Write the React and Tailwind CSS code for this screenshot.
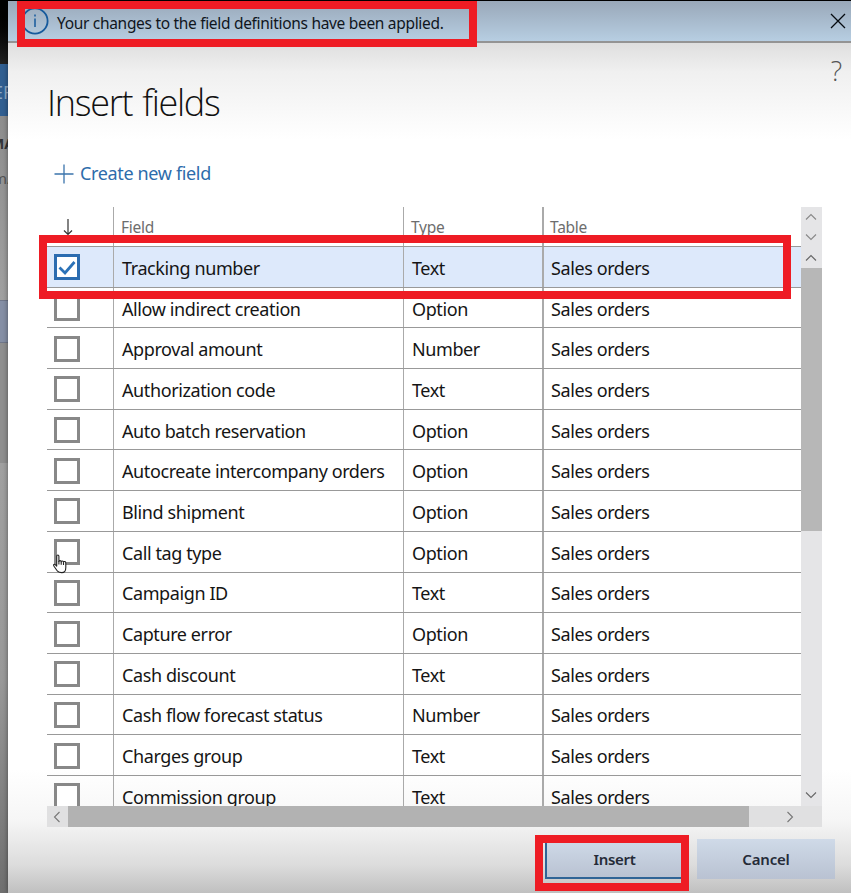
import { useState } from "react";
import clsx from "clsx";

const initialFields = [
  { name: "Tracking number", type: "Text", checked: true },
  { name: "Allow indirect creation", type: "Option" },
  { name: "Approval amount", type: "Number" },
  { name: "Authorization code", type: "Text" },
  { name: "Auto batch reservation", type: "Option" },
  { name: "Autocreate intercompany orders", type: "Option" },
  { name: "Blind shipment", type: "Option" },
  { name: "Call tag type", type: "Option" },
  { name: "Campaign ID", type: "Text" },
  { name: "Capture error", type: "Option" },
  { name: "Cash discount", type: "Text" },
  { name: "Cash flow forecast status", type: "Number" },
  { name: "Charges group", type: "Text" },
  { name: "Commission group", type: "Text" },
];

const Chevron = ({ d, className }) => (
  <svg
    viewBox="0 0 12 12"
    className={clsx("h-3 w-3 shrink-0", className)}
    fill="none"
    stroke="currentColor"
    strokeWidth="1.1"
  >
    <path d={d} />
  </svg>
);

const UP = "M1 8.5 6 3.5l5 5";
const DOWN = "M1 3.5l5 5 5-5";
const LEFT = "M8.5 1 3.5 6l5 5";
const RIGHT = "M3.5 1l5 5-5 5";

const Checkbox = ({ checked, onChange }) => (
  <button
    onClick={onChange}
    className={clsx(
      "flex h-[26px] w-[26px] items-center justify-center border-[3px] bg-white",
      checked ? "border-[#2b6cb0]" : "border-[#888]"
    )}
  >
    {checked && (
      <svg viewBox="0 0 20 20" className="h-5 w-5 shrink-0" fill="none">
        <path d="M2.5 10.5 8 16 17.5 5" stroke="#2b72b8" strokeWidth="2.8" />
      </svg>
    )}
  </button>
);

// Slice of the page that stays visible behind the dialog
const PageBehind = () => (
  <div className="flex w-2 shrink-0 flex-col overflow-hidden bg-[#999]">
    <div className="h-16 shrink-0 bg-gradient-to-b from-black to-[#222]" />
    <div className="flex h-[52px] shrink-0 items-center bg-[#315f91] pt-1 text-[18px] text-[#8fa9c4]">
      <span className="-ml-[7px]">EF</span>
    </div>
    <div className="flex h-[184px] shrink-0 flex-col items-start bg-gradient-to-b from-[#8d8d8d] to-[#a0a0a0] pt-[17px]">
      <span className="-ml-[9px] text-[14px] leading-[22px] font-bold text-[#333]">
        MA
      </span>
      <span className="-ml-[7px] mt-[12px] text-[15px] leading-[22px] text-[#555]">
        m/
      </span>
    </div>
    <div className="h-[43px] shrink-0 border-y border-[#70778a] bg-[#858fa5]" />
    <div className="h-[120px] shrink-0 bg-[#8f8f8f]" />
    <div className="flex-1 bg-gradient-to-b from-[#a0a0a0] via-[#999] to-[#6f6f6f]" />
  </div>
);

const Banner = () => (
  <div className="flex h-[43px] shrink-0 items-center border-t border-b-2 border-t-black border-b-[#949494] bg-gradient-to-b from-[#99a8b9] to-[#b7cee2] pr-[5px] pl-[13px]">
    <svg viewBox="0 0 28 28" className="h-7 w-7 shrink-0" fill="none">
      <circle cx="14" cy="14" r="12.6" stroke="#165a9c" strokeWidth="1.8" />
      <path d="M14 11.5v8.5M14 7.5v2" stroke="#165a9c" strokeWidth="1.5" />
    </svg>
    <span className="ml-[8px] pt-[6px] text-[15.5px] tracking-[-0.31px] whitespace-nowrap text-[#10161d]">
      Your changes to the field definitions have been applied.
    </span>
    <button className="ml-auto">
      <svg viewBox="0 0 16 16" className="h-4 w-4" fill="none">
        <path d="M1 1l14 14M15 1 1 15" stroke="#050a10" strokeWidth="1.3" />
      </svg>
    </button>
  </div>
);

const HeaderCell = ({ children, className }) => (
  <div
    className={clsx(
      "border-[#aaa] pt-[9px] text-[15.5px] tracking-[-0.25px] text-[#6d6d6d]",
      className
    )}
  >
    {children}
  </div>
);

const Cell = ({ children, className }) => (
  <div
    className={clsx(
      "flex items-center border-[#aaa] pt-[3px] text-[18px] tracking-[-0.4px] whitespace-nowrap text-[#151515]",
      className
    )}
  >
    {children}
  </div>
);

const FieldGrid = () => {
  const [fields, setFields] = useState(initialFields);

  const toggle = (index) => {
    setFields(
      fields.map((f, i) => (i === index ? { ...f, checked: !f.checked } : f))
    );
  };

  return (
    <div className="flex h-[620px] w-[775px] flex-col">
      <div className="flex h-[599px]">
        <div className="h-full w-[754px] overflow-hidden">
          <div className="grid h-[40px] grid-cols-[66px_290px_139px_1fr] border-b border-[#999]">
            <div className="flex justify-center pt-[12px] pr-[25px]">
              <svg viewBox="0 0 12 18" className="h-[18px] w-3" fill="none">
                <path
                  d="M6 0v15.5M2 11.5l4 4 4-4"
                  stroke="#333"
                  strokeWidth="1.2"
                />
              </svg>
            </div>
            <HeaderCell className="border-l pl-[7px]">Field</HeaderCell>
            <HeaderCell className="border-l pl-[7px]">Type</HeaderCell>
            <HeaderCell className="border-l-2 pl-[6px]">Table</HeaderCell>
          </div>
          {fields.map((field, i) => (
            <div
              key={field.name}
              className={clsx(
                "grid h-[40.7px] grid-cols-[66px_290px_139px_1fr] border-b border-[#999]",
                field.checked && "bg-[#dde9fb]"
              )}
            >
              <div className="flex items-center pt-px pl-[7px]">
                <Checkbox checked={field.checked} onChange={() => toggle(i)} />
              </div>
              <Cell className="border-l pl-2">{field.name}</Cell>
              <Cell className="border-l pl-2">{field.type}</Cell>
              <Cell className="border-l-2 pl-[7px]">Sales orders</Cell>
            </div>
          ))}
        </div>

        {/* vertical scrollbar */}
        <div className="flex w-[21px] flex-col items-center bg-[#e5e5e7] pt-1 text-[#888]">
          <Chevron d={UP} className="mr-px" />
          <Chevron d={DOWN} className="mt-[8px] mr-px" />
          <Chevron d={UP} className="mt-[9px] mr-px text-[#666]" />
          <div className="mt-[4px] h-[263px] w-full shrink-0 bg-[#b7b7b7]" />
          <Chevron d={DOWN} className="mt-auto mr-px mb-[5px] text-[#666]" />
        </div>
      </div>

      {/* horizontal scrollbar */}
      <div className="flex h-[21px] items-center bg-[#e0e0e1] text-[#777]">
        <Chevron d={LEFT} className="ml-1" />
        <div className="ml-[5px] h-full w-[681px] bg-[#b2b2b2]" />
        <Chevron d={RIGHT} className="ml-[35px]" />
      </div>
    </div>
  );
};

const HandCursor = () => (
  <svg
    viewBox="0 0 16 20"
    className="absolute top-[554px] left-[52px] h-5 w-4"
    fill="white"
    stroke="#222"
    strokeWidth="1.1"
    strokeLinejoin="round"
  >
    <path d="M5.5 17.2 2 12.2c-1.2-1.6.3-2.6 1.5-1.4l1.2 1.3V2.2c0-1.6 2.2-1.6 2.2 0v5.3c0-1.2 2.2-1.2 2.3.3 0-1.1 2.2-1.1 2.3.4.2-1 2.3-.9 2.3.7v4.5c0 3.2-1.6 5.2-4 5.2-2 0-3.2-.3-4.3-1.4z" />
    <path d="M6.9 7v3.5M9.2 8v2.8M11.5 8.3v2.7" />
  </svg>
);

const App = () => {
  return (
    <div className="relative flex h-[893px] w-[851px] overflow-hidden bg-white font-['Noto_Sans','Open_Sans',sans-serif]">
      <PageBehind />
      <div className="flex w-[843px] flex-col bg-[linear-gradient(to_bottom,#dedede_42px,#f0f0f0_72px,#fff_140px,#fff_770px,#f6f6f6_820px,#dcdcdc_865px,#c0c0c0_893px)] shadow-[0_0_5px_rgba(0,0,0,0.45)]">
        <Banner />
        <div className="flex h-[164px] shrink-0 flex-col pl-10">
          <div className="flex h-[87px] justify-between pr-[9px]">
            <h1 className="-ml-px pt-[32px] font-['Open_Sans'] text-[36px] leading-[56px] font-light tracking-[-1.3px] [word-spacing:2px] text-[#111]">
              Insert fields
            </h1>
            <span className="pt-[9px] font-['Open_Sans'] text-[27px] leading-[38px] font-light text-[#555]">
              ?
            </span>
          </div>
          <button className="mt-[30px] flex items-center gap-[6px] pl-[6px] text-[18px] tracking-[-0.35px] text-[#2d6cab]">
            <svg viewBox="0 0 20 20" className="h-5 w-5" fill="none">
              <path d="M10 .5v19M.5 10h19" stroke="#3b74ac" strokeWidth="1.3" />
            </svg>
            Create new field
          </button>
        </div>

        <div className="pl-[39px]">
          <FieldGrid />
        </div>

        <div className="mt-3 flex justify-end gap-[14px] pr-4 text-[15px] font-semibold text-[#252b38]">
          <button className="h-10 w-[138px] border-2 border-[#2f6496] bg-gradient-to-b from-[#cfdae8] to-[#b9c2d2] pt-px pl-px tracking-[-0.3px]">
            Insert
          </button>
          <button className="h-10 w-[138px] bg-gradient-to-b from-[#cfdae8] to-[#b9c2d2] pt-px tracking-[-0.2px]">
            Cancel
          </button>
        </div>
      </div>

      {/* callouts and pointer */}
      <div className="absolute top-px left-[17px] h-[46px] w-[460px] border-8 border-[#ee1c24]" />
      <div className="absolute top-[235px] left-[39px] h-[64px] w-[752px] border-8 border-[#ee1c24]" />
      <div className="absolute top-[835px] left-[535px] h-[56px] w-[154px] border-8 border-[#ee1c24]" />
      <HandCursor />
    </div>
  );
};

export default App;
